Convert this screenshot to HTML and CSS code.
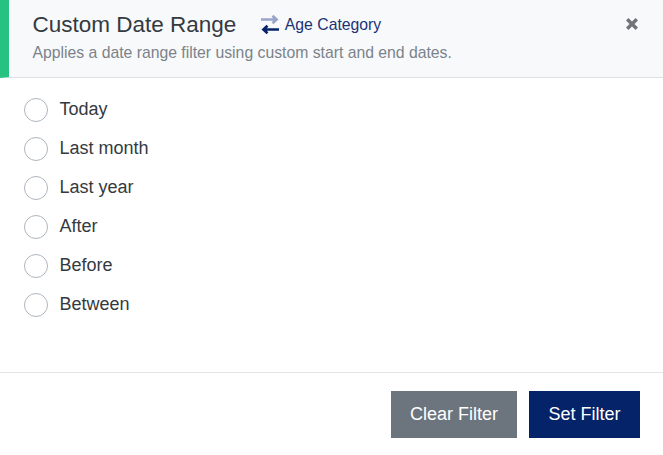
FILE: index.html
```html
<!DOCTYPE html>
<html lang="en">
<head>
<meta charset="utf-8">
<title>Custom Date Range</title>
<link rel="stylesheet" href="styles.css">
</head>
<body>
<div class="modal">
  <header class="head">
    <div class="head-text">
      <div class="title-row">
        <h1 class="title">Custom Date Range</h1>
        <svg class="swap" viewBox="0 0 18 19" width="18" height="19" aria-hidden="true">
          <path class="swap-top" d="M0 4.5H16M11.5 0.7L15.6 4.5L11.5 8.3" fill="none" stroke-width="2.6"/>
          <path class="swap-bottom" d="M18 14.5H2M6.5 10.7L2.4 14.5L6.5 18.3" fill="none" stroke-width="2.6"/>
        </svg>
        <span class="field">Age Category</span>
      </div>
      <p class="desc">Applies a date range filter using custom start and end dates.</p>
    </div>
    <svg class="close" viewBox="0 0 14 14" width="14" height="14" aria-hidden="true">
      <path d="M2.2 2.2l9.6 9.6M11.8 2.2l-9.6 9.6" fill="none" stroke-width="3.4"/>
    </svg>
  </header>
  <div class="options">
    <label class="option"><span class="radio"></span>Today</label>
    <label class="option"><span class="radio"></span>Last month</label>
    <label class="option"><span class="radio"></span>Last year</label>
    <label class="option"><span class="radio"></span>After</label>
    <label class="option"><span class="radio"></span>Before</label>
    <label class="option"><span class="radio"></span>Between</label>
  </div>
  <footer class="foot">
    <button class="btn btn-clear">Clear Filter</button>
    <button class="btn btn-set">Set Filter</button>
  </footer>
</div>
</body>
</html>
```
FILE: styles.css
```css
* { box-sizing: border-box; }
html, body { margin: 0; padding: 0; }
body {
  width: 663px;
  height: 455px;
  background: #fff;
  font-family: "Liberation Sans", Arial, sans-serif;
  color: #343a40;
  overflow: hidden;
}
.modal { display: flex; flex-direction: column; height: 455px; }
.head {
  height: 78px;
  display: flex;
  justify-content: space-between;
  align-items: flex-start;
  background: #f8f9fb;
  border-left: 9px solid #26c281;
  border-bottom: 1px solid #dee2e6;
  padding: 9px 24px 0 23.5px;
}
.title-row { display: flex; align-items: center; height: 31px; }
.title {
  margin: 0;
  font-size: 22.5px;
  font-weight: 400;
  line-height: 31px;
  color: #343a40;
}
.swap { margin-left: 24.5px; margin-right: 6px; flex: none; }
.swap-top { stroke: #98a4ca; }
.swap-bottom { stroke: #042368; }
.field { font-size: 15.75px; color: #1b3276; }
.desc {
  margin: 3px 0 0;
  font-size: 15.75px;
  line-height: 20px;
  color: #7b838a;
}
.close { margin-top: 8px; margin-right: 0.5px; stroke: #6f7477; flex: none; }
.options {
  flex: 1;
  padding: 12px 24px 0;
  display: flex;
  flex-direction: column;
}
.option {
  height: 39px;
  display: flex;
  align-items: center;
  font-size: 18px;
  color: #343a40;
}
.radio {
  width: 24px;
  height: 24px;
  border: 1px solid #adb5bd;
  border-radius: 50%;
  background: #fff;
  margin-right: 11.5px;
  flex: none;
}
.foot {
  height: 83px;
  border-top: 1px solid #e2e4e7;
  display: flex;
  justify-content: flex-end;
  gap: 12px;
  padding: 18px 23px 0 0;
}
.btn {
  height: 47px;
  border: 0;
  border-radius: 0;
  color: #fff;
  font-family: inherit;
  font-size: 18px;
  padding: 0;
}
.btn-clear { width: 126px; background: #6c757d; }
.btn-set { width: 111px; background: #042368; }
```
